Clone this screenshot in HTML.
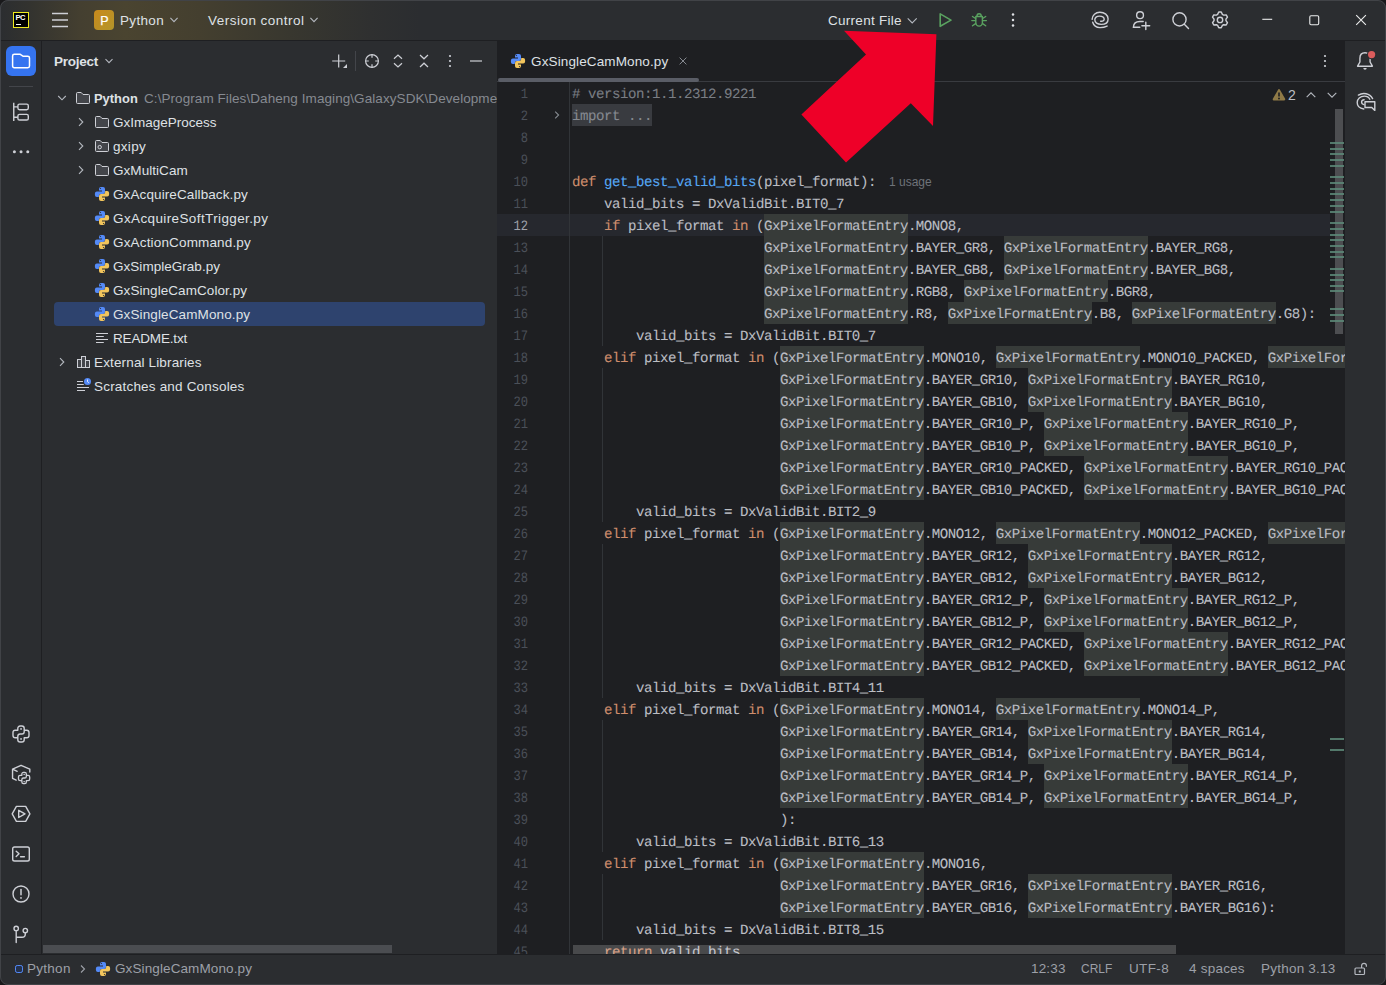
<!DOCTYPE html>
<html><head><meta charset="utf-8"><title>PyCharm</title>
<style>
*{box-sizing:border-box;margin:0;padding:0}
html,body{width:1386px;height:985px;overflow:hidden;background:#2b2d30}
body{font-family:"Liberation Sans",sans-serif;font-size:13.5px;color:#dfe1e5;position:relative}
.abs{position:absolute}
#title{position:absolute;left:0;top:0;width:1386px;height:40px;background:linear-gradient(90deg,#2b2d30 0px,#33332f 30px,#443f30 80px,#4a4430 125px,#443f2f 200px,#38372f 290px,#2f3030 370px,#2b2d30 420px)}
#titleline{position:absolute;left:0;top:40px;width:1386px;height:1px;background:#1e1f22}
#lstripe{position:absolute;left:0;top:40px;width:42px;height:914px;background:#2b2d30;border-right:1px solid #1e1f22}
#proj{position:absolute;left:42px;top:40px;width:455px;height:914px;background:#2b2d30}
#editor{position:absolute;left:497px;top:40px;width:848px;height:914px;background:#1e1f22;overflow:hidden}
#rstripe{position:absolute;left:1345px;top:40px;width:41px;height:914px;background:#2b2d30}
#status{position:absolute;left:0;top:954px;width:1386px;height:31px;background:#2b2d30;border-top:1px solid #1e1f22}
.t{position:absolute;white-space:nowrap;line-height:16px;margin-top:1px}
.sb{margin-top:0}
svg{position:absolute;overflow:visible}
.ln{position:absolute;right:817px;width:40px;margin-top:2px;text-rendering:geometricPrecision;text-align:right;font-family:"Liberation Mono",monospace;font-size:14.400px;line-height:22px;color:#4b5059;height:22px;transform:scaleX(.840);transform-origin:100% 0}
.ln.cur{color:#a1a3ab}
.cl{position:absolute;left:75px;height:22px;line-height:22px;margin-top:2px;text-rendering:geometricPrecision;white-space:pre;font-family:"Liberation Mono",monospace;font-size:14.100px;letter-spacing:-0.4614px;color:#bcbec4;-webkit-text-stroke:0.1px}
.kwt{color:#cf8e6d}.fnt{color:#56a8f5}.cmt{color:#7a7e85}.foldt{color:#868a91}
.bg{position:absolute;height:22px}.hl{background:#373b39}
.fold{background:#393b40}
.usage{position:absolute;white-space:nowrap;font-family:"Liberation Sans",sans-serif;font-size:12px;line-height:22px;height:22px;color:#6f737a;margin-top:1px}
.ig{left:105px;width:1px;background:#313438}
.mk{left:833px;width:14px;height:2px;background:#5d8a78;opacity:.85}
.sb{color:#9da0a8}
</style></head><body>
<!-- TITLE BAR -->
<div id="title"></div>
<!-- PC logo -->
<div class="abs" style="left:13px;top:12px;width:16px;height:16px;background:#000;border:1.200px solid #efeb1e"></div>
<div class="t" style="left:15.600px;top:13px;font-size:7.600px;line-height:8px;font-weight:bold;color:#fff;letter-spacing:-0.700px">PC</div>
<div class="abs" style="left:16px;top:24px;width:5px;height:1.200px;background:#fff"></div>
<!-- hamburger -->
<svg style="left:50px;top:10px" width="20" height="20" viewBox="0 0 20 20"><path d="M2 3.5H18M2 10H18M2 16.5H18" stroke="#ced0d6" stroke-width="1.3" fill="none"/></svg>
<!-- project widget -->
<div class="abs" style="left:94px;top:10px;width:20px;height:20px;border-radius:4px;background:linear-gradient(135deg,#c98a1c,#b3952a)"></div>
<div class="t" id="tP" style="letter-spacing:0px;left:100.300px;top:12px;font-size:12.500px;-webkit-text-stroke:0.25px #fff;color:#fff">P</div>
<div class="t" id="tPython" style="letter-spacing:0.334px;left:120px;top:12px">Python</div>
<svg style="left:168px;top:14px" width="12" height="12" viewBox="0 0 12 12"><path d="M2.400 3.800L6 7.600L9.600 3.800" stroke="#b4b8bf" stroke-width="1.1" fill="none"/></svg>
<div class="t" id="tVC" style="letter-spacing:0.478px;left:208px;top:12px">Version control</div>
<svg style="left:308px;top:14px" width="12" height="12" viewBox="0 0 12 12"><path d="M2.400 3.800L6 7.600L9.600 3.800" stroke="#b4b8bf" stroke-width="1.1" fill="none"/></svg>
<div class="t" id="tCF" style="letter-spacing:0.279px;left:828px;top:12px">Current File</div>
<svg style="left:906px;top:14px" width="12" height="12" viewBox="0 0 12 12"><path d="M1.700 4.300L6.200 8.900L10.700 4.300" stroke="#b4b8bf" stroke-width="1.1" fill="none"/></svg>
<!-- run -->
<svg style="left:937px;top:12px" width="16" height="16" viewBox="0 0 16 16"><path d="M3.200 1.900L14 8.100L3.200 14.300Z" stroke="#5aa260" stroke-width="1.600" fill="none" stroke-linejoin="round"/></svg>
<!-- debug -->
<svg style="left:971px;top:12px" width="16" height="16" viewBox="0 0 16 16" fill="none" stroke="#5aa260" stroke-width="1.400" stroke-linecap="round" stroke-linejoin="round"><path d="M4.800 4.500H11.400V10.400a3.300 3.700 0 0 1-6.600 0Z"/><path d="M5.900 4.500a2.200 2.700 0 0 1 4.400 0"/><path d="M4.600 6.500L1.500 4.500M4.600 8.600H.8M4.600 11.600L1.500 13.800M11.600 6.500l3.100-2M11.600 8.600h3.800M11.600 11.600l3.100 2.200"/></svg>
<!-- dots -->
<svg style="left:1005px;top:12px" width="16" height="16" viewBox="0 0 16 16" fill="#dfe1e5"><circle cx="8" cy="2.600" r="1.250"/><circle cx="8" cy="8" r="1.250"/><circle cx="8" cy="13.500" r="1.250"/></svg>
<!-- AI swirl -->
<svg style="left:1090px;top:10px" width="20" height="20" viewBox="0 0 20 20" fill="none" stroke="#ced0d6" stroke-width="1.400" stroke-linecap="round"><path d="M2.100 9.400C2.300 5.200 5.600 2.300 9.800 2.300C14.600 2.300 18.100 4.900 18.100 8.900C18.100 12.400 15.200 14.400 11.200 14.400C7.400 14.400 4.800 12.600 4.800 9.800C4.800 7.500 6.700 6.100 9.400 6.100C12.200 6.100 14.200 7.400 14.200 9.300C14.200 10.800 12.600 11.600 10.600 11.200"/><path d="M2.700 12.300C3.600 15.600 6.400 17.600 10 17.600C12.800 17.600 15.300 17 17.100 16.100"/></svg>
<!-- add user -->
<svg style="left:1131px;top:10px" width="20" height="20" viewBox="0 0 20 20" fill="none" stroke="#ced0d6" stroke-width="1.400" stroke-linecap="round"><circle cx="9.050" cy="5.200" r="3.400"/><path d="M8.800 17.200H2.400C2.600 13.700 5.200 11.500 8.800 11.500H12.200M14.800 12.100V19.600M10.900 15.800H18.700"/></svg>
<!-- search -->
<svg style="left:1170px;top:10px" width="20" height="20" viewBox="0 0 20 20" fill="none" stroke="#ced0d6" stroke-width="1.400" stroke-linecap="round"><circle cx="9.500" cy="9.400" r="6.600"/><path d="M14.300 14.200L18.500 18.500"/></svg>
<!-- settings -->
<svg style="left:1210px;top:10px" width="20" height="20" viewBox="0 0 20 20" fill="none" stroke="#ced0d6" stroke-width="1.400" stroke-linejoin="round"><path d="M8.75 2.00L11.25 2.00L12.38 4.39L13.58 5.08L16.22 4.87L17.47 7.03L15.96 9.21L15.96 10.59L17.47 12.77L16.22 14.93L13.58 14.72L12.38 15.41L11.25 17.80L8.75 17.80L7.62 15.41L6.42 14.72L3.78 14.93L2.53 12.77L4.04 10.59L4.04 9.21L2.53 7.03L3.78 4.87L6.42 5.08L7.62 4.39Z"/><circle cx="10" cy="9.900" r="2.700"/></svg>
<!-- window controls -->
<svg style="left:1259px;top:12px" width="16" height="16" viewBox="0 0 16 16"><path d="M3.300 7.300H13.200" stroke="#eceded" stroke-width="1.100"/></svg>
<svg style="left:1306px;top:12px" width="16" height="16" viewBox="0 0 16 16"><rect x="3.800" y="3.800" width="8.900" height="8.900" rx="1.200" stroke="#eceded" stroke-width="1.100" fill="none"/></svg>
<svg style="left:1353px;top:12px" width="16" height="16" viewBox="0 0 16 16"><path d="M3.200 3.100L12.900 12.800M12.900 3.100L3.200 12.800" stroke="#eceded" stroke-width="1.100"/></svg>
<!-- LEFT STRIPE -->
<div id="lstripe"></div>
<div class="abs" style="left:6px;top:46px;width:30px;height:30px;border-radius:6px;background:#3574f0"></div>
<svg style="left:11px;top:51px" width="20" height="20" viewBox="0 0 20 20" fill="none" stroke="#fff" stroke-width="1.500" stroke-linejoin="round"><path d="M1.600 4.900c0-1 .700-1.700 1.700-1.700h5.600l3.400 2.100h4.500c1 0 1.700.700 1.700 1.700v8c0 1-.700 1.700-1.700 1.700H3.300c-1 0-1.700-.700-1.700-1.700z"/></svg>
<div class="abs" style="left:9px;top:86px;width:24px;height:1px;background:#43454a"></div>
<!-- structure -->
<svg style="left:11px;top:102px" width="20" height="20" viewBox="0 0 20 20" fill="none" stroke="#ced0d6" stroke-width="1.400"><path d="M2.750 .800V19M2.750 4.900H6.900M2.750 15.200H6.900"/><rect x="6.900" y="2.100" width="10.400" height="5.600" rx="1.600"/><rect x="6.900" y="12.400" width="10.400" height="5.600" rx="1.600"/></svg>
<!-- more dots -->
<svg style="left:11px;top:142px" width="20" height="20" viewBox="0 0 20 20" fill="#ced0d6"><circle cx="3.400" cy="9.800" r="1.500"/><circle cx="10.050" cy="9.800" r="1.500"/><circle cx="16.750" cy="9.800" r="1.500"/></svg>
<!-- bottom icons -->
<!-- python console -->
<svg style="left:11px;top:724px" width="20" height="20" viewBox="0 0 20 20" fill="none" stroke="#ced0d6" stroke-width="1.400" stroke-linejoin="round" stroke-linecap="round"><path d="M6.800 6.200V4.300c0-1.300 1-2.300 2.300-2.300h1.800c1.300 0 2.300 1 2.300 2.300v3.400c0 1.300-1 2.300-2.300 2.300H9.100c-1.300 0-2.300 1-2.300 2.300v3.400c0 1.300 1 2.300 2.300 2.300h1.800c1.300 0 2.300-1 2.300-2.300v-1.900M6.800 6.200H4.300C3 6.200 2 7.200 2 8.500v3c0 1.300 1 2.300 2.300 2.300h2.500M13.200 6.200h2.500c1.300 0 2.300 1 2.300 2.300v3c0 1.300-1 2.300-2.300 2.300h-2.500"/><rect x="9.250" y="4.150" width="1.600" height="1.600" fill="#ced0d6" stroke="none"/><rect x="9.250" y="14.150" width="1.600" height="1.600" fill="#ced0d6" stroke="none"/></svg>
<!-- python packages -->
<svg style="left:11px;top:764px" width="20" height="20" viewBox="0 0 20 20" fill="none" stroke="#ced0d6" stroke-width="1.400" stroke-linejoin="round" stroke-linecap="round"><path d="M5.200 16.100L1.550 14.300V5.200L10.050 1.300L18.800 5.200V8M1.550 5.200L6.200 7.300"/><g transform="translate(13.100 14) scale(.7) translate(-10 -10)" stroke-width="1.900"><path d="M6.800 6.200V4.300c0-1.300 1-2.300 2.300-2.300h1.800c1.300 0 2.300 1 2.300 2.300v3.400c0 1.300-1 2.300-2.300 2.300H9.100c-1.300 0-2.300 1-2.300 2.300v3.400c0 1.300 1 2.300 2.300 2.300h1.800c1.300 0 2.300-1 2.300-2.300v-1.900M6.800 6.200H4.300C3 6.200 2 7.200 2 8.500v3c0 1.300 1 2.300 2.300 2.300h2.500M13.200 6.200h2.500c1.300 0 2.300 1 2.300 2.300v3c0 1.300-1 2.300-2.300 2.300h-2.500"/><rect x="9.100" y="3.900" width="1.900" height="1.900" fill="#ced0d6" stroke="none"/><rect x="9.100" y="14.200" width="1.900" height="1.900" fill="#ced0d6" stroke="none"/></g></svg>
<!-- services -->
<svg style="left:11px;top:804px" width="20" height="20" viewBox="0 0 20 20" fill="none" stroke="#ced0d6" stroke-width="1.400" stroke-linejoin="round"><path d="M5.400 2.400H14.700L18.900 9.900L14.700 17.400H5.400L1.200 9.900Z"/><path d="M7.700 6.300V13.500L14 9.900Z"/></svg>
<!-- terminal -->
<svg style="left:11px;top:844px" width="20" height="20" viewBox="0 0 20 20" fill="none" stroke="#ced0d6" stroke-width="1.400" stroke-linejoin="round" stroke-linecap="round"><rect x="1.700" y="3" width="16.600" height="14" rx="1.800"/><path d="M5.200 7.200L8 9.800l-2.800 2.600M9.600 12.800h3.800"/></svg>
<!-- problems -->
<svg style="left:11px;top:884px" width="20" height="20" viewBox="0 0 20 20" fill="none" stroke="#ced0d6" stroke-width="1.400" stroke-linecap="round"><circle cx="10" cy="10" r="8"/><path d="M10 5.600v5.200" stroke-width="1.500"/><circle cx="10" cy="13.900" r=".9" fill="#ced0d6" stroke="none"/></svg>
<!-- git -->
<svg style="left:11px;top:924px" width="20" height="20" viewBox="0 0 20 20" fill="none" stroke="#ced0d6" stroke-width="1.400" stroke-linecap="round"><circle cx="5.200" cy="4.400" r="2.200"/><circle cx="14.300" cy="6.600" r="2.200"/><path d="M5.200 6.600V18.500M14.300 8.800V10a3.300 3.300 0 0 1-3.300 3.300H5.200"/></svg>

<!-- PROJECT PANEL -->
<div id="proj">
 <div class="t" id="tProject" style="letter-spacing:-0.247px;left:12px;top:13px;font-weight:bold;color:#dfe1e5">Project</div>
 <svg style="left:61px;top:15px" width="12" height="12" viewBox="0 0 12 12"><path d="M2.500 4.200L6 7.700L9.500 4.200" stroke="#b4b8bf" stroke-width="1.100" fill="none"/></svg>
 <!-- header icons (centres at x-42) -->
 <svg style="left:288px;top:13px" width="18" height="16" viewBox="0 0 18 16" fill="none" stroke="#ced0d6" stroke-width="1.200"><path d="M8.700 1.500v13M2.200 8h13"/><path d="M17 11v4h-4z" fill="#ced0d6" stroke="none"/></svg>
 <div class="abs" style="left:313px;top:11px;width:1px;height:20px;background:#43454a"></div>
 <svg style="left:322px;top:13px" width="16" height="16" viewBox="0 0 16 16" fill="none" stroke="#ced0d6" stroke-width="1.200"><circle cx="8" cy="8" r="6.400"/><path d="M8 1.600v3.200M8 11.200v3.200M1.600 8h3.200M11.200 8h3.200"/></svg>
 <svg style="left:348px;top:13px" width="16" height="16" viewBox="0 0 16 16" fill="none" stroke="#ced0d6" stroke-width="1.200"><path d="M4 5.800L8 2l4 3.800M4 10.200L8 14l4-3.800"/></svg>
 <svg style="left:374px;top:13px" width="16" height="16" viewBox="0 0 16 16" fill="none" stroke="#ced0d6" stroke-width="1.200"><path d="M4 2l4 3.800L12 2M4 14l4-3.800L12 14"/></svg>
 <svg style="left:400px;top:13px" width="16" height="16" viewBox="0 0 16 16" fill="#ced0d6"><circle cx="8" cy="3" r="1.100"/><circle cx="8" cy="8" r="1.100"/><circle cx="8" cy="13" r="1.100"/></svg>
 <svg style="left:426px;top:13px" width="16" height="16" viewBox="0 0 16 16"><path d="M2 8H14" stroke="#ced0d6" stroke-width="1.200"/></svg>
 <svg style="left:12px;top:50px" width="16" height="16" viewBox="0 0 16 16"><path d="M4.200 6L8 9.800L11.800 6" stroke="#b4b8bf" stroke-width="1.100" fill="none"/></svg>
<svg style="left:33px;top:50px" width="16" height="16" viewBox="0 0 16 16"><path d="M1.500 3.500a1 1 0 0 1 1-1H6.200l1.800 2H13.500a1 1 0 0 1 1 1V12.500a1 1 0 0 1-1 1H2.500a1 1 0 0 1-1-1Z" fill="#43454a" stroke="#ced0d6" stroke-width="1"/></svg>
<div class="t tr" id="tr0" style="letter-spacing:0px;transform:scaleX(0.9574);transform-origin:0 0;left:52px;top:50px;font-weight:bold">Python</div>
<div class="t" id="trpath" style="letter-spacing:0.071px;left:102px;top:50px;color:#868a91;width:353px;overflow:hidden">C:\Program Files\Daheng Imaging\GalaxySDK\Developmen</div>
<svg style="left:30.5px;top:74px" width="16" height="16" viewBox="0 0 16 16"><path d="M6 4.2L9.800 8L6 11.800" stroke="#b4b8bf" stroke-width="1.100" fill="none"/></svg>
<svg style="left:52px;top:74px" width="16" height="16" viewBox="0 0 16 16"><path d="M1.500 3.500a1 1 0 0 1 1-1H6.200l1.800 2H13.500a1 1 0 0 1 1 1V12.500a1 1 0 0 1-1 1H2.500a1 1 0 0 1-1-1Z" fill="#43454a" stroke="#ced0d6" stroke-width="1"/></svg>
<div class="t tr" id="tr1" style="letter-spacing:0.004px;left:71px;top:74px">GxImageProcess</div>
<svg style="left:30.5px;top:98px" width="16" height="16" viewBox="0 0 16 16"><path d="M6 4.2L9.800 8L6 11.800" stroke="#b4b8bf" stroke-width="1.100" fill="none"/></svg>
<svg style="left:52px;top:98px" width="16" height="16" viewBox="0 0 16 16"><path d="M1.500 3.500a1 1 0 0 1 1-1H6.200l1.800 2H13.500a1 1 0 0 1 1 1V12.500a1 1 0 0 1-1 1H2.500a1 1 0 0 1-1-1Z" fill="#43454a" stroke="#ced0d6" stroke-width="1"/><circle cx="5.700" cy="9.100" r="1.700" fill="none" stroke="#ced0d6" stroke-width="1"/></svg>
<div class="t tr" id="tr2" style="letter-spacing:0.296px;left:71px;top:98px">gxipy</div>
<svg style="left:30.5px;top:122px" width="16" height="16" viewBox="0 0 16 16"><path d="M6 4.2L9.800 8L6 11.800" stroke="#b4b8bf" stroke-width="1.100" fill="none"/></svg>
<svg style="left:52px;top:122px" width="16" height="16" viewBox="0 0 16 16"><path d="M1.500 3.500a1 1 0 0 1 1-1H6.200l1.800 2H13.500a1 1 0 0 1 1 1V12.500a1 1 0 0 1-1 1H2.500a1 1 0 0 1-1-1Z" fill="#43454a" stroke="#ced0d6" stroke-width="1"/></svg>
<div class="t tr" id="tr3" style="letter-spacing:0.048px;left:71px;top:122px">GxMultiCam</div>
<svg style="left:52px;top:146px" width="16" height="16" viewBox="0 0 16 16"><use href="#py"/></svg>
<div class="t tr" id="tr4" style="letter-spacing:0.105px;left:71px;top:146px">GxAcquireCallback.py</div>
<svg style="left:52px;top:170px" width="16" height="16" viewBox="0 0 16 16"><use href="#py"/></svg>
<div class="t tr" id="tr5" style="letter-spacing:0.384px;left:71px;top:170px">GxAcquireSoftTrigger.py</div>
<svg style="left:52px;top:194px" width="16" height="16" viewBox="0 0 16 16"><use href="#py"/></svg>
<div class="t tr" id="tr6" style="letter-spacing:0.161px;left:71px;top:194px">GxActionCommand.py</div>
<svg style="left:52px;top:218px" width="16" height="16" viewBox="0 0 16 16"><use href="#py"/></svg>
<div class="t tr" id="tr7" style="letter-spacing:0.032px;left:71px;top:218px">GxSimpleGrab.py</div>
<svg style="left:52px;top:242px" width="16" height="16" viewBox="0 0 16 16"><use href="#py"/></svg>
<div class="t tr" id="tr8" style="letter-spacing:0.066px;left:71px;top:242px">GxSingleCamColor.py</div>
<div class="abs" style="left:12px;top:262px;width:431px;height:24px;border-radius:4px;background:#2e436e"></div>
<svg style="left:52px;top:266px" width="16" height="16" viewBox="0 0 16 16"><use href="#py"/></svg>
<div class="t tr" id="tr9" style="letter-spacing:0.114px;left:71px;top:266px">GxSingleCamMono.py</div>
<svg style="left:52px;top:290px" width="16" height="16" viewBox="0 0 16 16"><path d="M2 3.500H14M2 6.500H9.800M2 9.500H14M2 12.500H9.800" stroke="#ced0d6" stroke-width="1"/></svg>
<div class="t tr" id="tr10" style="letter-spacing:-0.163px;left:71px;top:290px">README.txt</div>
<svg style="left:12px;top:314px" width="16" height="16" viewBox="0 0 16 16"><path d="M6 4.2L9.800 8L6 11.800" stroke="#b4b8bf" stroke-width="1.100" fill="none"/></svg>
<svg style="left:33px;top:314px" width="16" height="16" viewBox="0 0 16 16" fill="#43454a" stroke="#ced0d6" stroke-width="1"><rect x="2.500" y="5.500" width="4" height="8"/><rect x="6.500" y="2.500" width="4" height="11"/><rect x="10.500" y="6.500" width="4" height="7"/></svg>
<div class="t tr" id="tr11" style="letter-spacing:0.144px;left:52px;top:314px">External Libraries</div>
<svg style="left:34px;top:338px" width="16" height="16" viewBox="0 0 16 16"><path d="M1 3.500H7M1 6.500H7.800M1 9.500H13M1 12.500H9" stroke="#ced0d6" stroke-width="1"/><circle cx="11.500" cy="3.500" r="3.500" fill="#548af7"/><path d="M11.500 1.500V3.700L12.800 4.800" stroke="#fff" stroke-width=".8" fill="none"/></svg>
<div class="t tr" id="tr12" style="letter-spacing:0.188px;left:52px;top:338px">Scratches and Consoles</div>
 <div class="abs" style="left:1px;top:905px;width:349px;height:8px;background:#4b4d51"></div>
</div>
<!-- EDITOR -->
<div id="editor">
 <!-- tab bar -->
 <svg style="left:13px;top:13px" width="16" height="16" viewBox="0 0 16 16"><use href="#py"/></svg>
 <div class="t" id="tTab" style="letter-spacing:0.126px;left:34px;top:13px;color:#dfe1e5">GxSingleCamMono.py</div>
 <svg style="left:178px;top:13px" width="16" height="16" viewBox="0 0 16 16"><path d="M4.600 4.600L11.400 11.400M11.400 4.600L4.600 11.400" stroke="#868a91" stroke-width="1"/></svg>
 <div class="abs" style="left:0;top:41px;width:848px;height:1px;background:#393b40"></div>
 <div class="abs" style="left:1px;top:38px;width:201px;height:4px;background:#5a5d66;border-radius:2px"></div>
 <svg style="left:820px;top:13px" width="16" height="16" viewBox="0 0 16 16" fill="#ced0d6"><circle cx="8" cy="3" r="1.100"/><circle cx="8" cy="8" r="1.100"/><circle cx="8" cy="13" r="1.100"/></svg>
 <!-- current line -->
 <div class="abs" style="left:0;top:174px;width:833px;height:22px;background:#26282e"></div>
 <!-- gutter line -->
 <div class="abs" style="left:72px;top:42px;width:1px;height:872px;background:#313438"></div>
 <!-- indent guides -->
 <div class="abs ig" style="top:196px;height:110px"></div>
 <div class="abs ig" style="top:328px;height:154px"></div>
 <div class="abs ig" style="top:504px;height:154px"></div>
 <div class="abs ig" style="top:680px;height:132px"></div>
 <div class="abs ig" style="top:834px;height:66px"></div>
 <!-- fold chevron -->
 <svg style="left:52px;top:67px" width="16" height="16" viewBox="0 0 16 16"><path d="M6.200 4.600L9.600 8L6.200 11.400" stroke="#868a91" stroke-width="1.100" fill="none"/></svg>
 <div id="codewrap" style="position:absolute;left:0;top:-40px;width:848px;height:954px">
<div class="bg fold" style="left:75px;top:104px;width:80px"></div>
<div class="bg hl" style="left:267px;top:214px;width:144px"></div>
<div class="bg hl" style="left:267px;top:236px;width:144px"></div>
<div class="bg hl" style="left:507px;top:236px;width:144px"></div>
<div class="bg hl" style="left:267px;top:258px;width:144px"></div>
<div class="bg hl" style="left:507px;top:258px;width:144px"></div>
<div class="bg hl" style="left:267px;top:280px;width:144px"></div>
<div class="bg hl" style="left:467px;top:280px;width:144px"></div>
<div class="bg hl" style="left:267px;top:302px;width:144px"></div>
<div class="bg hl" style="left:451px;top:302px;width:144px"></div>
<div class="bg hl" style="left:635px;top:302px;width:144px"></div>
<div class="bg hl" style="left:283px;top:346px;width:144px"></div>
<div class="bg hl" style="left:499px;top:346px;width:144px"></div>
<div class="bg hl" style="left:771px;top:346px;width:144px"></div>
<div class="bg hl" style="left:283px;top:368px;width:144px"></div>
<div class="bg hl" style="left:531px;top:368px;width:144px"></div>
<div class="bg hl" style="left:283px;top:390px;width:144px"></div>
<div class="bg hl" style="left:531px;top:390px;width:144px"></div>
<div class="bg hl" style="left:283px;top:412px;width:144px"></div>
<div class="bg hl" style="left:547px;top:412px;width:144px"></div>
<div class="bg hl" style="left:283px;top:434px;width:144px"></div>
<div class="bg hl" style="left:547px;top:434px;width:144px"></div>
<div class="bg hl" style="left:283px;top:456px;width:144px"></div>
<div class="bg hl" style="left:587px;top:456px;width:144px"></div>
<div class="bg hl" style="left:283px;top:478px;width:144px"></div>
<div class="bg hl" style="left:587px;top:478px;width:144px"></div>
<div class="bg hl" style="left:283px;top:522px;width:144px"></div>
<div class="bg hl" style="left:499px;top:522px;width:144px"></div>
<div class="bg hl" style="left:771px;top:522px;width:144px"></div>
<div class="bg hl" style="left:283px;top:544px;width:144px"></div>
<div class="bg hl" style="left:531px;top:544px;width:144px"></div>
<div class="bg hl" style="left:283px;top:566px;width:144px"></div>
<div class="bg hl" style="left:531px;top:566px;width:144px"></div>
<div class="bg hl" style="left:283px;top:588px;width:144px"></div>
<div class="bg hl" style="left:547px;top:588px;width:144px"></div>
<div class="bg hl" style="left:283px;top:610px;width:144px"></div>
<div class="bg hl" style="left:547px;top:610px;width:144px"></div>
<div class="bg hl" style="left:283px;top:632px;width:144px"></div>
<div class="bg hl" style="left:587px;top:632px;width:144px"></div>
<div class="bg hl" style="left:283px;top:654px;width:144px"></div>
<div class="bg hl" style="left:587px;top:654px;width:144px"></div>
<div class="bg hl" style="left:283px;top:698px;width:144px"></div>
<div class="bg hl" style="left:499px;top:698px;width:144px"></div>
<div class="bg hl" style="left:283px;top:720px;width:144px"></div>
<div class="bg hl" style="left:531px;top:720px;width:144px"></div>
<div class="bg hl" style="left:283px;top:742px;width:144px"></div>
<div class="bg hl" style="left:531px;top:742px;width:144px"></div>
<div class="bg hl" style="left:283px;top:764px;width:144px"></div>
<div class="bg hl" style="left:547px;top:764px;width:144px"></div>
<div class="bg hl" style="left:283px;top:786px;width:144px"></div>
<div class="bg hl" style="left:547px;top:786px;width:144px"></div>
<div class="bg hl" style="left:283px;top:852px;width:144px"></div>
<div class="bg hl" style="left:283px;top:874px;width:144px"></div>
<div class="bg hl" style="left:531px;top:874px;width:144px"></div>
<div class="bg hl" style="left:283px;top:896px;width:144px"></div>
<div class="bg hl" style="left:531px;top:896px;width:144px"></div>
<div class="ln" style="top:82px">1</div>
<div class="ln" style="top:104px">2</div>
<div class="ln" style="top:126px">8</div>
<div class="ln" style="top:148px">9</div>
<div class="ln" style="top:170px">10</div>
<div class="ln" style="top:192px">11</div>
<div class="ln cur" style="top:214px">12</div>
<div class="ln" style="top:236px">13</div>
<div class="ln" style="top:258px">14</div>
<div class="ln" style="top:280px">15</div>
<div class="ln" style="top:302px">16</div>
<div class="ln" style="top:324px">17</div>
<div class="ln" style="top:346px">18</div>
<div class="ln" style="top:368px">19</div>
<div class="ln" style="top:390px">20</div>
<div class="ln" style="top:412px">21</div>
<div class="ln" style="top:434px">22</div>
<div class="ln" style="top:456px">23</div>
<div class="ln" style="top:478px">24</div>
<div class="ln" style="top:500px">25</div>
<div class="ln" style="top:522px">26</div>
<div class="ln" style="top:544px">27</div>
<div class="ln" style="top:566px">28</div>
<div class="ln" style="top:588px">29</div>
<div class="ln" style="top:610px">30</div>
<div class="ln" style="top:632px">31</div>
<div class="ln" style="top:654px">32</div>
<div class="ln" style="top:676px">33</div>
<div class="ln" style="top:698px">34</div>
<div class="ln" style="top:720px">35</div>
<div class="ln" style="top:742px">36</div>
<div class="ln" style="top:764px">37</div>
<div class="ln" style="top:786px">38</div>
<div class="ln" style="top:808px">39</div>
<div class="ln" style="top:830px">40</div>
<div class="ln" style="top:852px">41</div>
<div class="ln" style="top:874px">42</div>
<div class="ln" style="top:896px">43</div>
<div class="ln" style="top:918px">44</div>
<div class="ln" style="top:940px">45</div>
<div class="cl" style="top:82px"><span class="cmt"># version:1.1.2312.9221</span></div>
<div class="cl" style="top:104px"><span class="foldt">import ...</span></div>
<div class="cl" style="top:126px"></div>
<div class="cl" style="top:148px"></div>
<div class="usage" style="left:392px;top:170px">1 usage</div>
<div class="cl" style="top:170px"><span class="kwt">def</span> <span class="fnt">get_best_valid_bits</span>(pixel_format):</div>
<div class="cl" style="top:192px">    valid_bits = DxValidBit.BIT0_7</div>
<div class="cl" style="top:214px">    <span class="kwt">if</span> pixel_format <span class="kwt">in</span> (GxPixelFormatEntry.MONO8,</div>
<div class="cl" style="top:236px">                        GxPixelFormatEntry.BAYER_GR8, GxPixelFormatEntry.BAYER_RG8,</div>
<div class="cl" style="top:258px">                        GxPixelFormatEntry.BAYER_GB8, GxPixelFormatEntry.BAYER_BG8,</div>
<div class="cl" style="top:280px">                        GxPixelFormatEntry.RGB8, GxPixelFormatEntry.BGR8,</div>
<div class="cl" style="top:302px">                        GxPixelFormatEntry.R8, GxPixelFormatEntry.B8, GxPixelFormatEntry.G8):</div>
<div class="cl" style="top:324px">        valid_bits = DxValidBit.BIT0_7</div>
<div class="cl" style="top:346px">    <span class="kwt">elif</span> pixel_format <span class="kwt">in</span> (GxPixelFormatEntry.MONO10, GxPixelFormatEntry.MONO10_PACKED, GxPixelFormatEntry.MONO10_P,</div>
<div class="cl" style="top:368px">                          GxPixelFormatEntry.BAYER_GR10, GxPixelFormatEntry.BAYER_RG10,</div>
<div class="cl" style="top:390px">                          GxPixelFormatEntry.BAYER_GB10, GxPixelFormatEntry.BAYER_BG10,</div>
<div class="cl" style="top:412px">                          GxPixelFormatEntry.BAYER_GR10_P, GxPixelFormatEntry.BAYER_RG10_P,</div>
<div class="cl" style="top:434px">                          GxPixelFormatEntry.BAYER_GB10_P, GxPixelFormatEntry.BAYER_BG10_P,</div>
<div class="cl" style="top:456px">                          GxPixelFormatEntry.BAYER_GR10_PACKED, GxPixelFormatEntry.BAYER_RG10_PACKED,</div>
<div class="cl" style="top:478px">                          GxPixelFormatEntry.BAYER_GB10_PACKED, GxPixelFormatEntry.BAYER_BG10_PACKED):</div>
<div class="cl" style="top:500px">        valid_bits = DxValidBit.BIT2_9</div>
<div class="cl" style="top:522px">    <span class="kwt">elif</span> pixel_format <span class="kwt">in</span> (GxPixelFormatEntry.MONO12, GxPixelFormatEntry.MONO12_PACKED, GxPixelFormatEntry.MONO12_P,</div>
<div class="cl" style="top:544px">                          GxPixelFormatEntry.BAYER_GR12, GxPixelFormatEntry.BAYER_RG12,</div>
<div class="cl" style="top:566px">                          GxPixelFormatEntry.BAYER_GB12, GxPixelFormatEntry.BAYER_BG12,</div>
<div class="cl" style="top:588px">                          GxPixelFormatEntry.BAYER_GR12_P, GxPixelFormatEntry.BAYER_RG12_P,</div>
<div class="cl" style="top:610px">                          GxPixelFormatEntry.BAYER_GB12_P, GxPixelFormatEntry.BAYER_BG12_P,</div>
<div class="cl" style="top:632px">                          GxPixelFormatEntry.BAYER_GR12_PACKED, GxPixelFormatEntry.BAYER_RG12_PACKED,</div>
<div class="cl" style="top:654px">                          GxPixelFormatEntry.BAYER_GB12_PACKED, GxPixelFormatEntry.BAYER_BG12_PACKED):</div>
<div class="cl" style="top:676px">        valid_bits = DxValidBit.BIT4_11</div>
<div class="cl" style="top:698px">    <span class="kwt">elif</span> pixel_format <span class="kwt">in</span> (GxPixelFormatEntry.MONO14, GxPixelFormatEntry.MONO14_P,</div>
<div class="cl" style="top:720px">                          GxPixelFormatEntry.BAYER_GR14, GxPixelFormatEntry.BAYER_RG14,</div>
<div class="cl" style="top:742px">                          GxPixelFormatEntry.BAYER_GB14, GxPixelFormatEntry.BAYER_BG14,</div>
<div class="cl" style="top:764px">                          GxPixelFormatEntry.BAYER_GR14_P, GxPixelFormatEntry.BAYER_RG14_P,</div>
<div class="cl" style="top:786px">                          GxPixelFormatEntry.BAYER_GB14_P, GxPixelFormatEntry.BAYER_BG14_P,</div>
<div class="cl" style="top:808px">                          ):</div>
<div class="cl" style="top:830px">        valid_bits = DxValidBit.BIT6_13</div>
<div class="cl" style="top:852px">    <span class="kwt">elif</span> pixel_format <span class="kwt">in</span> (GxPixelFormatEntry.MONO16,</div>
<div class="cl" style="top:874px">                          GxPixelFormatEntry.BAYER_GR16, GxPixelFormatEntry.BAYER_RG16,</div>
<div class="cl" style="top:896px">                          GxPixelFormatEntry.BAYER_GB16, GxPixelFormatEntry.BAYER_BG16):</div>
<div class="cl" style="top:918px">        valid_bits = DxValidBit.BIT8_15</div>
<div class="cl" style="top:940px">    <span class="kwt">return</span> valid_bits</div>
 </div>
 <!-- inspection widget -->
 <svg style="left:775px;top:48px" width="14" height="14" viewBox="0 0 14 14"><path d="M7 2.200L12.200 11.400H1.800Z" fill="#8f7a47" stroke="#8f7a47" stroke-width="2.200" stroke-linejoin="round"/><path d="M7 4.600V8.400" stroke="#1e1f22" stroke-width="1.600"/><circle cx="7" cy="10.500" r=".950" fill="#1e1f22"/></svg>
 <div class="t" id="tWarn" style="letter-spacing:0px;left:791px;top:46px;font-size:14px;color:#bcbec4">2</div>
 <svg style="left:806px;top:47px" width="16" height="16" viewBox="0 0 16 16"><path d="M3.700 10.200L8 5.900L12.300 10.200" stroke="#b4b8bf" stroke-width="1.100" fill="none"/></svg>
 <svg style="left:827px;top:47px" width="16" height="16" viewBox="0 0 16 16"><path d="M3.700 5.900L8 10.200L12.300 5.900" stroke="#b4b8bf" stroke-width="1.100" fill="none"/></svg>
 <!-- v scrollbar thumb -->
 <div class="abs" style="left:838px;top:69px;width:8px;height:225px;background:#4d4e51"></div>
 <div class="abs mk" style="top:102px"></div>
<div class="abs mk" style="top:108px"></div>
<div class="abs mk" style="top:113px"></div>
<div class="abs mk" style="top:119px"></div>
<div class="abs mk" style="top:125px"></div>
<div class="abs mk" style="top:136px"></div>
<div class="abs mk" style="top:142px"></div>
<div class="abs mk" style="top:148px"></div>
<div class="abs mk" style="top:153px"></div>
<div class="abs mk" style="top:159px"></div>
<div class="abs mk" style="top:165px"></div>
<div class="abs mk" style="top:171px"></div>
<div class="abs mk" style="top:182px"></div>
<div class="abs mk" style="top:188px"></div>
<div class="abs mk" style="top:194px"></div>
<div class="abs mk" style="top:199px"></div>
<div class="abs mk" style="top:205px"></div>
<div class="abs mk" style="top:211px"></div>
<div class="abs mk" style="top:216px"></div>
<div class="abs mk" style="top:228px"></div>
<div class="abs mk" style="top:234px"></div>
<div class="abs mk" style="top:239px"></div>
<div class="abs mk" style="top:245px"></div>
<div class="abs mk" style="top:250px"></div>
<div class="abs mk" style="top:268px"></div>
<div class="abs mk" style="top:274px"></div>
<div class="abs mk" style="top:280px"></div>
<div class="abs mk" style="top:698px"></div>
<div class="abs mk" style="top:709px"></div>
 <!-- h scrollbar -->
 <div class="abs" style="left:76px;top:905px;width:603px;height:9px;background:rgba(255,255,255,.19)"></div>
</div>

<!-- RIGHT STRIPE -->
<div id="rstripe"></div>
<svg style="left:1355px;top:50px" width="20" height="20" viewBox="0 0 20 20" fill="none" stroke="#ced0d6" stroke-width="1.400" stroke-linejoin="round" stroke-linecap="round"><path d="M2.600 16.200L4.900 12V8.400C4.900 4.700 7 2.700 10 2.700C13 2.700 15.100 4.700 15.100 8.400V12L17.400 16.200Z"/><path d="M8.300 18.100h3.400a1.700 1.700 0 0 1-3.400 0z" fill="#ced0d6" stroke="none"/><circle cx="16.600" cy="4.600" r="4.700" fill="#2b2d30" stroke="none"/><circle cx="16.600" cy="4.600" r="3.600" fill="#db5c5c" stroke="none"/></svg>
<svg style="left:1355px;top:92px" width="20" height="20" viewBox="0 0 20 20" fill="none" stroke="#ced0d6" stroke-width="1.400" stroke-linecap="round" stroke-linejoin="round"><path d="M3.400 3.100C8 .2 14.600 1.200 17.600 6.600"/><path d="M8.800 17C4.600 16.400 2.200 13.600 2.200 10.500C2.200 6.800 5.200 4.100 9.400 4.100C11.800 4.100 13.800 5.200 14.800 7.200"/><path d="M9 12.600C7.400 12.400 6.600 11.300 6.600 10.100C6.600 8.800 7.600 7.800 9.100 7.700"/><path d="M10 9.800H19.800V18.400L16.800 15.500H10Z" fill="#2b2d30"/></svg>

<!-- STATUS BAR -->
<div id="status"></div>
<div class="abs" style="left:15px;top:965px;width:8.300px;height:8.300px;border:1.300px solid #548af7;border-radius:2.200px;background:#25324d"></div>
<div class="t sb" id="sPy" style="letter-spacing:0.274px;left:27px;top:961px">Python</div>
<svg style="left:75px;top:961px" width="16" height="16" viewBox="0 0 16 16"><path d="M6 4.500L9.500 8L6 11.500" stroke="#9da0a8" stroke-width="1.100" fill="none"/></svg>
<svg style="left:95px;top:961px" width="16" height="16" viewBox="0 0 16 16"><use href="#py"/></svg>
<div class="t sb" id="sFile" style="letter-spacing:0.108px;left:115px;top:961px">GxSingleCamMono.py</div>
<div class="t sb" id="sPos" style="letter-spacing:0.151px;left:1031px;top:961px">12:33</div>
<div class="t sb" id="sCrlf" style="letter-spacing:0px;transform:scaleX(0.8847);transform-origin:0 0;left:1081px;top:961px">CRLF</div>
<div class="t sb" id="sUtf" style="letter-spacing:0.363px;left:1129px;top:961px">UTF-8</div>
<div class="t sb" id="sSp" style="letter-spacing:0.222px;left:1189px;top:961px">4 spaces</div>
<div class="t sb" id="sInt" style="letter-spacing:0.224px;left:1261px;top:961px">Python 3.13</div>
<svg style="left:1353px;top:961px" width="16" height="16" viewBox="0 0 16 16" fill="none" stroke="#b4b8bf" stroke-width="1.200"><rect x="2" y="7" width="9.500" height="6.500" rx="1"/><path d="M8.600 7V4.800c0-1.500 1-2.500 2.400-2.500s2.400 1 2.400 2.500v1"/><rect x="5.800" y="9.500" width="2" height="2" fill="#b4b8bf" stroke="none"/></svg>

<div id="titleline"></div>
<!-- RED ARROW -->
<svg style="left:0;top:0" width="1386" height="985" viewBox="0 0 1386 985"><polygon points="844,30.700 936.400,34.200 933,126 910.800,103.200 846,162.600 801.400,114.600 866,54.500" fill="#ee0028"/></svg>
<!-- window frame -->
<div class="abs" style="left:0;top:0;width:1386px;height:985px;border:1px solid #414347;border-radius:8px;box-shadow:0 0 0 12px #19191b"></div>
<svg width="0" height="0" style="left:0;top:0"><defs><g id="py"><path d="M7 .9h2a2 2 0 0 1 2 2v3.200a2 2 0 0 1-2 2H6.800a2 2 0 0 0-2 2v.9H2.900a2 2 0 0 1-2-2V7.500a2 2 0 0 1 2-2H8v-.9H5V2.900a2 2 0 0 1 2-2z" fill="#548af7"/><path transform="rotate(180 8 8)" d="M7 .9h2a2 2 0 0 1 2 2v3.200a2 2 0 0 1-2 2H6.800a2 2 0 0 0-2 2v.9H2.900a2 2 0 0 1-2-2V7.500a2 2 0 0 1 2-2H8v-.9H5V2.900a2 2 0 0 1 2-2z" fill="#f2c55c"/><circle cx="6.500" cy="2.500" r=".600" fill="#2b2d30"/><circle cx="9.500" cy="13.500" r=".600" fill="#2b2d30"/></g></defs></svg>
</body></html>
